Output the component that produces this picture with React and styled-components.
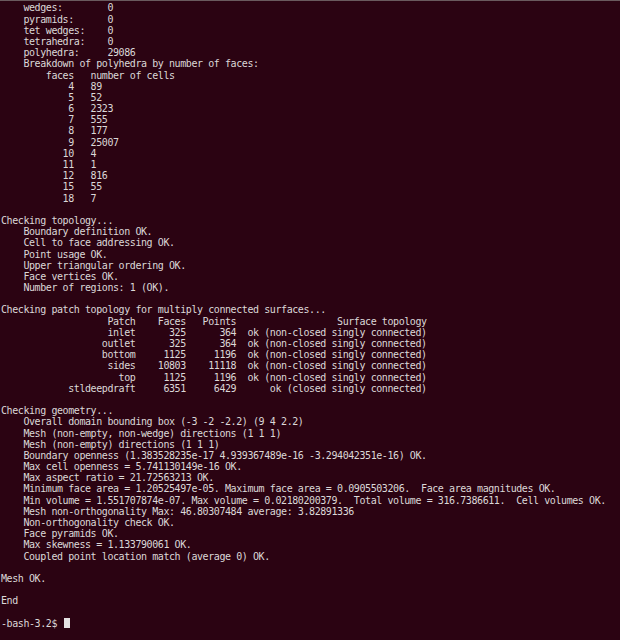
import React from "react";
import styled, { createGlobalStyle } from "styled-components";

const Global = createGlobalStyle`
  html, body { margin: 0; padding: 0; background: #2b0312; }
  #root { width: 620px; height: 640px; overflow: hidden; }
`;

const Terminal = styled.div`
  box-sizing: border-box;
  width: 620px;
  height: 640px;
  background: #2b0312;
  border-top: 1px solid #6a5a5e;
  padding: 1.4px 0 0 1px;
  font-family: "DejaVu Sans Mono", "Liberation Mono", monospace;
  font-size: 10px;
  letter-spacing: -0.42px;
  line-height: 11.2px;
  color: #dcd8d8;
  overflow: hidden;
`;

const Line = styled.div`
  white-space: pre;
  height: 11.2px;
`;

const Cursor = styled.span`
  display: inline-block;
  width: 6px;
  height: 10px;
  margin-left: 1px;
  vertical-align: -1px;
  background: #e4e2e2;
`;

const cellTypes = [
  ["wedges:", "0"],
  ["pyramids:", "0"],
  ["tet wedges:", "0"],
  ["tetrahedra:", "0"],
  ["polyhedra:", "29086"],
];

const faceRows = [
  ["4", "89"],
  ["5", "52"],
  ["6", "2323"],
  ["7", "555"],
  ["8", "177"],
  ["9", "25007"],
  ["10", "4"],
  ["11", "1"],
  ["12", "816"],
  ["15", "55"],
  ["18", "7"],
];

const patches = [
  ["inlet", "325", "364", "ok (non-closed singly connected)"],
  ["outlet", "325", "364", "ok (non-closed singly connected)"],
  ["bottom", "1125", "1196", "ok (non-closed singly connected)"],
  ["sides", "10803", "11118", "ok (non-closed singly connected)"],
  ["top", "1125", "1196", "ok (non-closed singly connected)"],
  ["stldeepdraft", "6351", "6429", "ok (closed singly connected)"],
];

const geometry = [
  "Overall domain bounding box (-3 -2 -2.2) (9 4 2.2)",
  "Mesh (non-empty, non-wedge) directions (1 1 1)",
  "Mesh (non-empty) directions (1 1 1)",
  "Boundary openness (1.383528235e-17 4.939367489e-16 -3.294042351e-16) OK.",
  "Max cell openness = 5.741130149e-16 OK.",
  "Max aspect ratio = 21.72563213 OK.",
  "Minimum face area = 1.20525497e-05. Maximum face area = 0.0905503206.  Face area magnitudes OK.",
  "Min volume = 1.551707874e-07. Max volume = 0.02180200379.  Total volume = 316.7386611.  Cell volumes OK.",
  "Mesh non-orthogonality Max: 46.80307484 average: 3.82891336",
  "Non-orthogonality check OK.",
  "Face pyramids OK.",
  "Max skewness = 1.133790061 OK.",
  "Coupled point location match (average 0) OK.",
];

const topology = [
  "Boundary definition OK.",
  "Cell to face addressing OK.",
  "Point usage OK.",
  "Upper triangular ordering OK.",
  "Face vertices OK.",
  "Number of regions: 1 (OK).",
];

const ind = "    ";

function buildLines() {
  const lines = [];
  cellTypes.forEach(([k, v]) => lines.push(ind + k.padEnd(15) + v));
  lines.push(ind + "Breakdown of polyhedra by number of faces:");
  lines.push("        faces   number of cells");
  faceRows.forEach(([f, n]) => lines.push(f.padStart(13) + "   " + n));
  lines.push("");
  lines.push("Checking topology...");
  topology.forEach((t) => lines.push(ind + t));
  lines.push("");
  lines.push("Checking patch topology for multiply connected surfaces...");
  lines.push(
    "Patch".padStart(24) + "Faces".padStart(9) + "Points".padStart(9) + "Surface topology".padStart(34)
  );
  patches.forEach(([n, f, p, s]) =>
    lines.push(n.padStart(24) + f.padStart(9) + p.padStart(9) + s.padStart(34))
  );
  lines.push("");
  lines.push("Checking geometry...");
  geometry.forEach((g) => lines.push(ind + g));
  lines.push("");
  lines.push("Mesh OK.");
  lines.push("");
  lines.push("End");
  lines.push("");
  return lines;
}

export default function App() {
  const lines = buildLines();
  return (
    <>
      <Global />
      <Terminal>
        {lines.map((l, i) => (
          <Line key={i}>{l}</Line>
        ))}
        <Line>
          -bash-3.2$ <Cursor />
        </Line>
      </Terminal>
    </>
  );
}
